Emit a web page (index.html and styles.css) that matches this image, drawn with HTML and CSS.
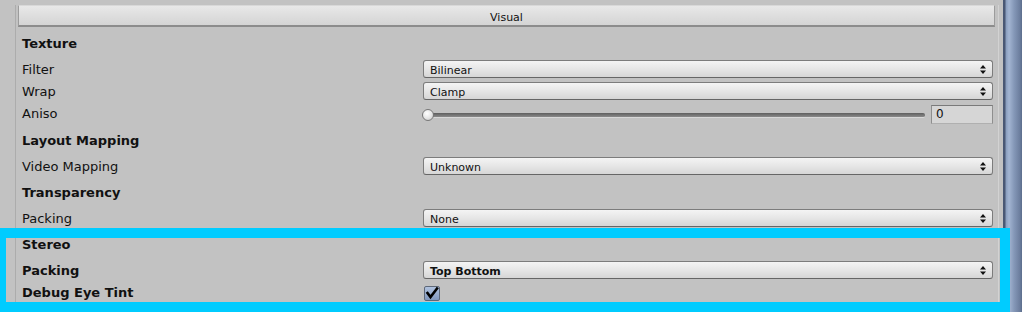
FILE: index.html
```html
<!DOCTYPE html>
<html>
<head>
<meta charset="utf-8">
<link rel="stylesheet" href="styles.css">
</head>
<body>
<div class="inspector">
  <div class="main">
    <div class="frame">
      <div class="header">Visual</div>
      <div class="section first">Texture</div>
      <div class="prop">
        <div class="label">Filter</div>
        <div class="popup"><span>Bilinear</span><svg class="arrows" width="6" height="9" viewBox="0 0 6 9"><path d="M3 0 L6 3.5 H0 Z M0 5.5 H6 L3 9 Z" fill="#111"/></svg></div>
      </div>
      <div class="prop">
        <div class="label">Wrap</div>
        <div class="popup"><span>Clamp</span><svg class="arrows" width="6" height="9" viewBox="0 0 6 9"><path d="M3 0 L6 3.5 H0 Z M0 5.5 H6 L3 9 Z" fill="#111"/></svg></div>
      </div>
      <div class="prop tall">
        <div class="label">Aniso</div>
        <div class="slider-wrap">
          <div class="slider"><div class="track"></div><div class="thumb"></div></div>
          <div class="numfield">0</div>
        </div>
      </div>
      <div class="section">Layout Mapping</div>
      <div class="prop">
        <div class="label">Video Mapping</div>
        <div class="popup"><span>Unknown</span><svg class="arrows" width="6" height="9" viewBox="0 0 6 9"><path d="M3 0 L6 3.5 H0 Z M0 5.5 H6 L3 9 Z" fill="#111"/></svg></div>
      </div>
      <div class="section">Transparency</div>
      <div class="prop">
        <div class="label">Packing</div>
        <div class="popup"><span>None</span><svg class="arrows" width="6" height="9" viewBox="0 0 6 9"><path d="M3 0 L6 3.5 H0 Z M0 5.5 H6 L3 9 Z" fill="#111"/></svg></div>
      </div>
      <div class="section">Stereo</div>
      <div class="prop bold">
        <div class="label">Packing</div>
        <div class="popup"><span>Top Bottom</span><svg class="arrows" width="6" height="9" viewBox="0 0 6 9"><path d="M3 0 L6 3.5 H0 Z M0 5.5 H6 L3 9 Z" fill="#111"/></svg></div>
      </div>
      <div class="prop bold">
        <div class="label">Debug Eye Tint</div>
        <div class="check"><svg width="16" height="14" viewBox="0 0 16 14"><path d="M3.5 7 L6.5 11 L13 2.5" fill="none" stroke="#000" stroke-width="2.6" stroke-linecap="square"/></svg></div>
      </div>
    </div>
  </div>
  <div class="scrollbar"></div>
</div>
<div class="highlight"></div>
</body>
</html>
```

FILE: styles.css
```css
html, body {
  margin: 0;
  padding: 0;
}
body {
  width: 1022px;
  height: 312px;
  overflow: hidden;
  background: #c2c2c2;
  font-family: "DejaVu Sans", sans-serif;
  color: #111;
  position: relative;
}
.inspector {
  display: flex;
  height: 312px;
}
.main {
  width: 1003px;
  padding: 5px 4px 0 15px;
  box-sizing: border-box;
}
.frame {
  height: 100%;
  border-left: 1px solid #acacac;
  border-right: 1px solid #d2d2d2;
  padding: 0 3px 0 2px;
  box-sizing: border-box;
}
.header {
  height: 22px;
  box-sizing: border-box;
  background: linear-gradient(#e8e8e8, #d4d4d4);
  border: 1px solid #9c9c9c;
  border-top-color: #d8d8d8;
  border-bottom: 2px solid #8c8c8c;
  font-size: 11px;
  line-height: 19px;
  padding-top: 2px;
  text-align: center;
  color: #111;
}
.section {
  height: 22px;
  line-height: 22px;
  font-size: 13px;
  font-weight: bold;
  padding-left: 4px;
  margin: 5px 0 3px;
}
.section.first {
  margin-top: 6px;
}
.prop {
  height: 22px;
  display: flex;
  align-items: center;
  padding: 0 2px 0 4px;
  font-size: 13px;
}
.prop.tall {
  height: 23px;
}
.prop.bold {
  font-weight: bold;
}
.label {
  width: 401px;
  flex: none;
}
.popup {
  flex: 1;
  height: 18px;
  box-sizing: border-box;
  border: 1px solid #7c7c7c;
  border-bottom-color: #666;
  border-radius: 3px;
  background: linear-gradient(#f4f4f4, #e6e6e6 50%, #d6d6d6);
  display: flex;
  align-items: center;
  padding: 0 5px 0 6px;
  font-size: 11px;
  line-height: 16px;
}
.popup span {
  flex: 1;
  padding-top: 3px;
}
.arrows {
  display: block;
  margin-right: 1px;
}
.slider-wrap {
  flex: 1;
  display: flex;
  align-items: center;
  padding-top: 2px;
}
.slider {
  flex: 1;
  position: relative;
  height: 19px;
  margin-right: 6px;
}
.track {
  position: absolute;
  left: 3px;
  right: 0;
  top: 8px;
  height: 4px;
  border-radius: 2px;
  background: linear-gradient(#5e5e5e, #8a8a8a);
  border-bottom: 1px solid #d8d8d8;
}
.thumb {
  position: absolute;
  left: -1px;
  top: 4px;
  width: 12px;
  height: 12px;
  box-sizing: border-box;
  border-radius: 50%;
  border: 1px solid #777;
  background: radial-gradient(circle at 40% 35%, #ffffff, #e4e4e4 55%, #bdbdbd);
}
.numfield {
  width: 62px;
  height: 19px;
  box-sizing: border-box;
  border: 1px solid #8e8e8e;
  border-top-color: #7a7a7a;
  border-bottom-color: #b0b0b0;
  background: #d6d6d6;
  font-size: 12px;
  line-height: 17px;
  padding-left: 4px;
  font-weight: normal;
}
.check {
  width: 16px;
  height: 15px;
  box-sizing: border-box;
  border: 1px solid #5e6878;
  border-radius: 2px;
  background: linear-gradient(#b0c2de, #8097bd);
  margin-left: 1px;
  margin-top: 2px;
  position: relative;
}
.check svg {
  position: absolute;
  left: -1px;
  top: -1px;
}
.scrollbar {
  width: 19px;
  height: 312px;
  background: linear-gradient(to right, #4a5874 0, #4a5874 2px, #8a9ebe 3px, #a3b5d2 6px, #8598b8 11px, #6b7d9d 17px, #5c6d8c 19px);
}
.highlight {
  position: absolute;
  left: -4px;
  top: 228px;
  width: 1014px;
  height: 84px;
  box-sizing: border-box;
  border: 10px solid #00ccff;
}
```
